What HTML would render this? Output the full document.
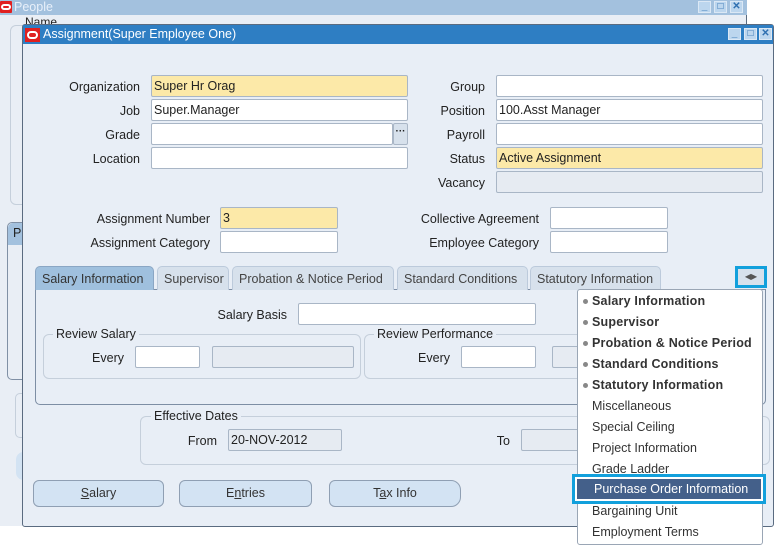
<!DOCTYPE html>
<html><head><meta charset="utf-8"><style>
*{box-sizing:border-box;margin:0;padding:0}
body{width:780px;height:551px;background:#fff;position:relative;overflow:hidden;font-family:"Liberation Sans",sans-serif;font-size:12.5px;color:#222}
.a{position:absolute}
.lbl{position:absolute;text-align:right;white-space:nowrap;line-height:14px}
.in{position:absolute;background:#fff;border:1px solid #a9b6c6;border-radius:2px;height:22px;padding:2px 2px;line-height:16px;white-space:nowrap}
.y{background:#fce9a8}
.d{background:#e6ebf2}
.grp{position:absolute;border:1px solid #c5cfdb;border-radius:6px}
.gt{position:absolute;background:#e8eef6;padding:0 3px;top:-8px;line-height:14px}
.tab{position:absolute;top:266px;height:24px;background:#d7e1ec;border:1px solid #bccadb;border-bottom:none;border-radius:5px 5px 0 0;padding:5px 6px 0;color:#444;white-space:nowrap}
.btn{position:absolute;top:480px;height:27px;background:#d3e3f3;border:1px solid #8f9fb3;border-radius:6px;text-align:center;line-height:25px;color:#333}
.wc{position:absolute;width:13px;height:12px;background:#bcd6ee;border:1px solid #dbe8f5;font-size:10px;line-height:10px;text-align:center;color:#2e6fb0;font-weight:bold}
.mi{position:absolute;left:0;width:184px;height:21px;line-height:21px;padding-left:14px;white-space:nowrap;color:#333}
.mi b{letter-spacing:.2px}
.dot{position:absolute;left:5px;top:8px;width:5px;height:5px;border-radius:3px;background:#888}
</style></head><body>
<div class="a" style="left:0;top:0;width:747px;height:526px;background:#e9eef5;border-right:1px solid #5a6b80"></div>
<div class="a" style="left:0;top:0;width:747px;height:15px;background:#a3c1de"></div>
<div class="a" style="left:0;top:1px;width:12px;height:12px;background:#e02020;border-radius:1px"><div class="a" style="left:1px;top:3px;width:10px;height:6px;border:2px solid #fff;border-radius:3px"></div></div>
<div class="a" style="left:14px;top:0;color:#e8f0fa;font-size:12.5px;line-height:14px">People</div>
<div class="wc" style="left:698px;top:1px">_</div><div class="wc" style="left:714px;top:1px">□</div><div class="wc" style="left:730px;top:1px">✕</div>
<div class="a" style="left:25px;top:16px;font-size:12px;line-height:12px;height:8px;overflow:hidden">Name</div>
<div class="a" style="left:10px;top:25px;width:20px;height:180px;border:1px solid #c5cfdb;border-radius:6px"></div>
<div class="a" style="left:7px;top:222px;width:20px;height:158px;border:1px solid #8090a5;border-radius:5px;background:#e9eef5"><div style="height:22px;background:#a3c1de;padding:3px 0 0 5px;border-radius:5px 5px 0 0">P</div></div>
<div class="a" style="left:15px;top:393px;width:15px;height:45px;border:1px solid #c5cfdb;border-radius:5px"></div>
<div class="a" style="left:16px;top:452px;width:15px;height:28px;background:#d3e3f3;border-radius:8px"></div>
<div class="a" style="left:22px;top:24px;width:752px;height:503px;background:#e8eef6;border:1px solid #5a6b80;border-radius:3px"></div>
<div class="a" style="left:23px;top:25px;width:750px;height:19px;background:#2e7ec3"></div>
<div class="a" style="left:25px;top:28px;width:15px;height:14px;background:#e02020"><div class="a" style="left:2px;top:3px;width:11px;height:8px;border:2px solid #fff;border-radius:4px"></div></div>
<div class="a" style="left:43px;top:27px;color:#fff;line-height:15px">Assignment(Super Employee One)</div>
<div class="wc" style="left:728px;top:28px">_</div><div class="wc" style="left:744px;top:28px">□</div><div class="wc" style="left:759px;top:28px">✕</div>

<div class="lbl" style="left:40px;width:100px;top:80px">Organization</div>
<div class="in y" style="left:151px;top:75px;width:257px">Super Hr Orag</div>
<div class="lbl" style="left:40px;width:100px;top:104px">Job</div>
<div class="in" style="left:151px;top:99px;width:257px">Super.Manager</div>
<div class="lbl" style="left:40px;width:100px;top:128px">Grade</div>
<div class="in" style="left:151px;top:123px;width:242px"></div>
<div class="in" style="left:393px;top:123px;width:15px;background:#d7e1ec;padding:0;text-align:center;font-size:10px;font-weight:bold">···</div>
<div class="lbl" style="left:40px;width:100px;top:152px">Location</div>
<div class="in" style="left:151px;top:147px;width:257px"></div>

<div class="lbl" style="left:385px;width:100px;top:80px">Group</div>
<div class="in" style="left:496px;top:75px;width:267px"></div>
<div class="lbl" style="left:385px;width:100px;top:104px">Position</div>
<div class="in" style="left:496px;top:99px;width:267px">100.Asst Manager</div>
<div class="lbl" style="left:385px;width:100px;top:128px">Payroll</div>
<div class="in" style="left:496px;top:123px;width:267px"></div>
<div class="lbl" style="left:385px;width:100px;top:152px">Status</div>
<div class="in y" style="left:496px;top:147px;width:267px">Active Assignment</div>
<div class="lbl" style="left:385px;width:100px;top:176px">Vacancy</div>
<div class="in d" style="left:496px;top:171px;width:267px"></div>

<div class="lbl" style="left:50px;width:160px;top:212px">Assignment Number</div>
<div class="in y" style="left:220px;top:207px;width:118px">3</div>
<div class="lbl" style="left:50px;width:160px;top:236px">Assignment Category</div>
<div class="in" style="left:220px;top:231px;width:118px"></div>
<div class="lbl" style="left:379px;width:160px;top:212px">Collective Agreement</div>
<div class="in" style="left:550px;top:207px;width:118px"></div>
<div class="lbl" style="left:379px;width:160px;top:236px">Employee Category</div>
<div class="in" style="left:550px;top:231px;width:118px"></div>

<div class="a" style="left:35px;top:289px;width:731px;height:116px;border:1px solid #7d8ea4;border-radius:0 0 5px 5px"></div>
<div class="tab" style="left:35px;width:119px;background:#9fc0de;color:#333;border-color:#8aa6c4">Salary Information</div>
<div class="tab" style="left:157px;width:72px">Supervisor</div>
<div class="tab" style="left:232px;width:162px">Probation &amp; Notice Period</div>
<div class="tab" style="left:397px;width:131px">Standard Conditions</div>
<div class="tab" style="left:530px;width:131px">Statutory Information</div>
<div class="a" style="left:735px;top:266px;width:32px;height:22px;border:3px solid #12a0dc;background:#d7e1ec;text-align:center;font-size:8px;line-height:16px;color:#555">◀▶</div>

<div class="lbl" style="left:187px;width:100px;top:308px">Salary Basis</div>
<div class="in" style="left:298px;top:303px;width:238px"></div>
<div class="grp" style="left:43px;top:334px;width:318px;height:45px"><div class="gt" style="left:9px">Review Salary</div></div>
<div class="lbl" style="left:60px;width:64px;top:351px">Every</div>
<div class="in" style="left:135px;top:346px;width:65px"></div>
<div class="in d" style="left:212px;top:346px;width:142px"></div>
<div class="grp" style="left:364px;top:334px;width:398px;height:45px"><div class="gt" style="left:9px">Review Performance</div></div>
<div class="lbl" style="left:380px;width:70px;top:351px">Every</div>
<div class="in" style="left:461px;top:346px;width:75px"></div>
<div class="in d" style="left:552px;top:346px;width:60px"></div>

<div class="grp" style="left:140px;top:416px;width:630px;height:49px"><div class="gt" style="left:10px">Effective Dates</div></div>
<div class="lbl" style="left:150px;width:67px;top:434px">From</div>
<div class="in d" style="left:228px;top:429px;width:114px">20-NOV-2012</div>
<div class="lbl" style="left:480px;width:30px;top:434px">To</div>
<div class="in d" style="left:521px;top:429px;width:80px"></div>

<div class="btn" style="left:33px;width:131px"><u>S</u>alary</div>
<div class="btn" style="left:179px;width:133px">E<u>n</u>tries</div>
<div class="btn" style="left:329px;width:132px;border-radius:6px 10px 10px 6px">T<u>a</u>x Info</div>

<div class="a" style="left:577px;top:289px;width:186px;height:256px;background:#fff;border:1px solid #9aa6b5;border-radius:3px">
<div class="mi" style="top:1px"><span class="dot"></span><b>Salary Information</b></div>
<div class="mi" style="top:22px"><span class="dot"></span><b>Supervisor</b></div>
<div class="mi" style="top:43px"><span class="dot"></span><b>Probation &amp; Notice Period</b></div>
<div class="mi" style="top:64px"><span class="dot"></span><b>Standard Conditions</b></div>
<div class="mi" style="top:85px"><span class="dot"></span><b>Statutory Information</b></div>
<div class="mi" style="top:106px">Miscellaneous</div>
<div class="mi" style="top:127px">Special Ceiling</div>
<div class="mi" style="top:148px">Project Information</div>
<div class="mi" style="top:169px">Grade Ladder</div>
<div class="mi" style="top:211px">Bargaining Unit</div>
<div class="mi" style="top:232px">Employment Terms</div>
</div>
<div class="a" style="left:572px;top:474px;width:194px;height:30px;border:3px solid #12a0dc;background:#fff;padding:2px"><div style="background:#44608a;color:#fff;height:20px;line-height:20px;padding-left:17px;white-space:nowrap">Purchase Order Information</div></div>
</body></html>
